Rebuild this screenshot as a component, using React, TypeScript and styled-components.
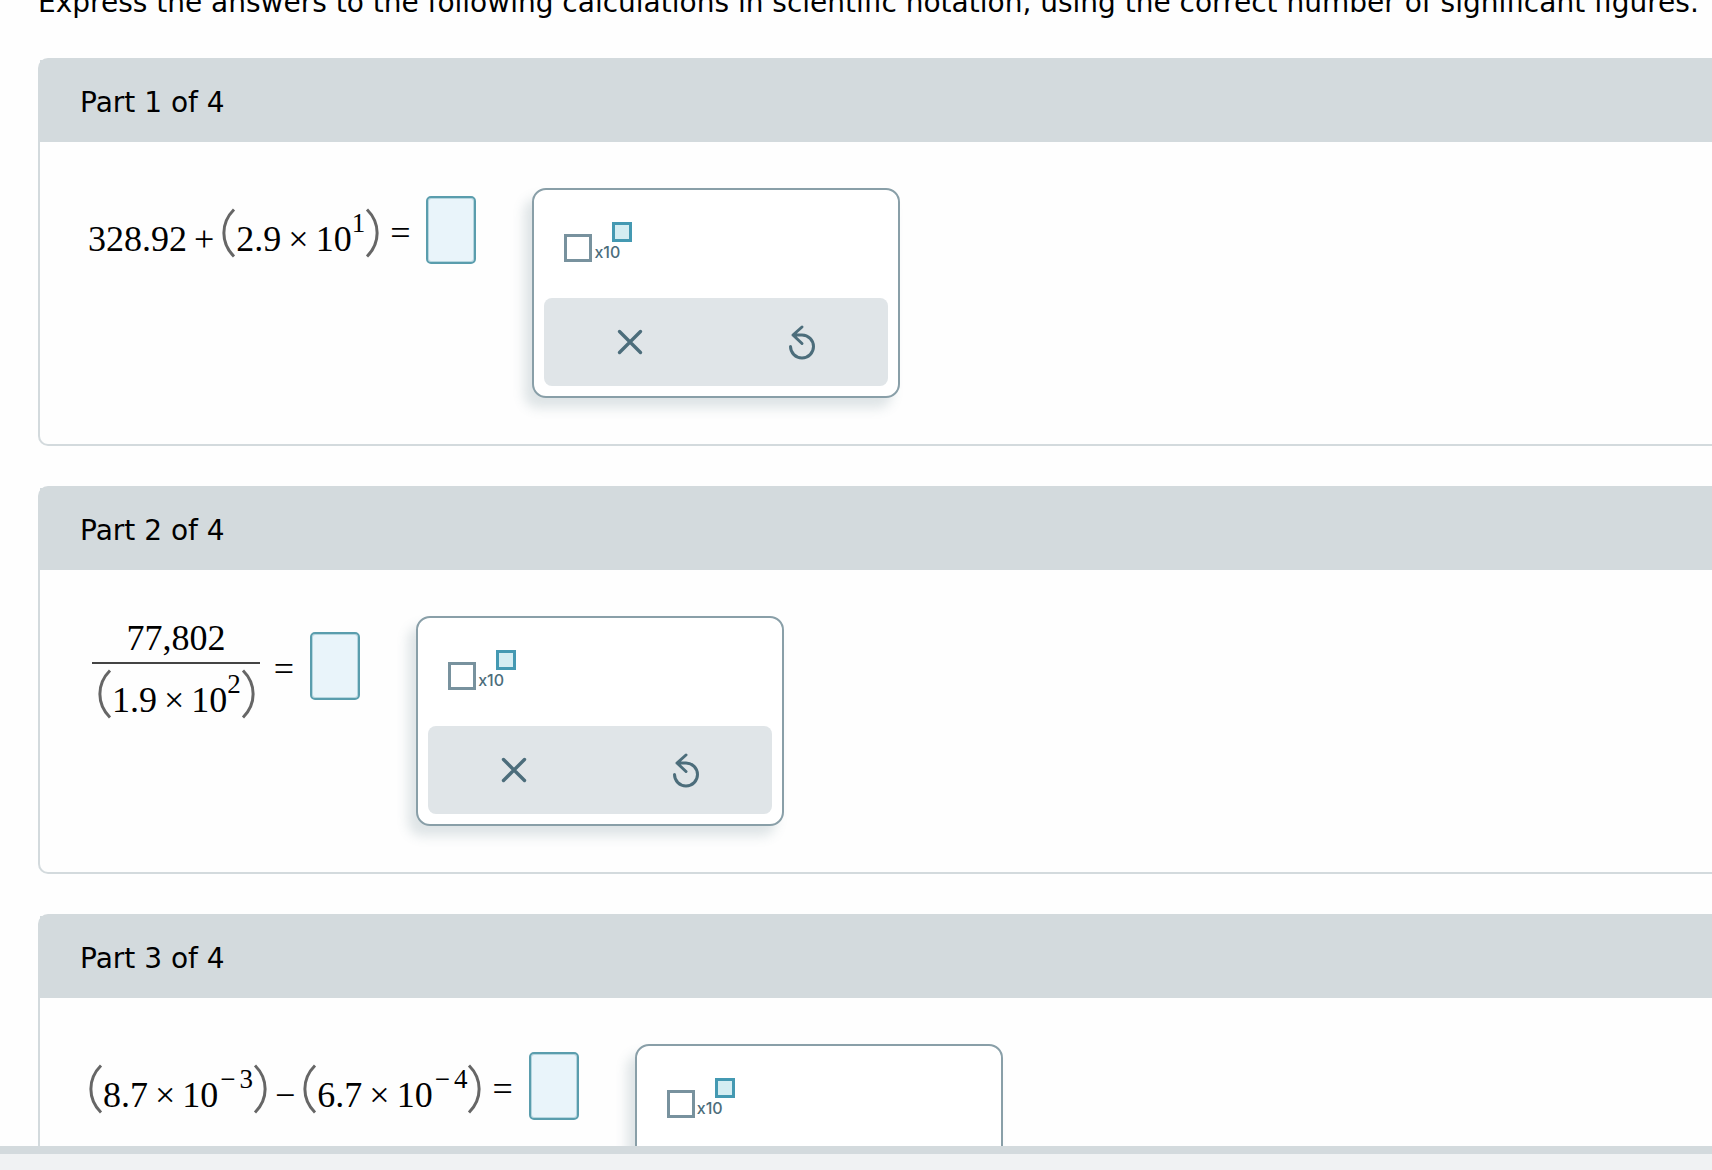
import React from "react";
import styled, { createGlobalStyle } from "styled-components";

const GlobalStyle = createGlobalStyle`
  *, *::before, *::after { box-sizing: border-box; }
  body {
    margin: 0;
    background: #fefefe;
    color: #000;
    font-family: Verdana, "DejaVu Sans", sans-serif;
    font-size: 28px;
  }
  button, input { font: inherit; color: inherit; margin: 0; }
`;

const Page = styled.div`
  display: flex;
  flex-direction: column;
  height: 100vh;
`;

const Worksheet = styled.main`
  flex: 1;
  min-height: 0;
  overflow: hidden;
  padding-left: 38px;
`;

const Instructions = styled.p`
  margin: -16px 0 36px;
  line-height: 38px;
  white-space: nowrap;
`;

const Parts = styled.div`
  display: flex;
  flex-direction: column;
  gap: 40px;
`;

const Card = styled.section`
  border: 2px solid #d3dadd;
  border-right: 0;
  border-radius: 10px 0 0 10px;
`;

const CardHeader = styled.h2`
  margin: 0;
  padding: 24px 40px 20px;
  background: #d3dadd;
  font-size: 28px;
  font-weight: 400;
  line-height: 38px;
`;

const CardBody = styled.div`
  display: flex;
  align-items: flex-start;
  gap: 56px;
  padding: 46px 48px;
`;

const Equation = styled.div<{ $stacked?: boolean }>`
  display: flex;
  align-items: center;
  padding-top: ${(p) => (p.$stacked ? 3 : 8)}px;
  font-family: "Times New Roman", "Liberation Serif", serif;
  font-size: 36px;
  line-height: 38px;
`;

const Terms = styled.div`
  display: flex;
  align-items: flex-end;
  white-space: nowrap;
`;

const Operator = styled.span`
  margin: 0 7px;
`;

const Equals = styled.span`
  margin: 0 16px 0 10px;
`;

const Exponent = styled.sup`
  font-size: 27px;
  line-height: 0;
  vertical-align: 19px;
`;

const ExponentSign = styled.span`
  margin: 0 4px 0 2px;
`;

const ParenShape = styled.svg`
  flex: none;
  width: 15px;
  height: 50px;
`;

const Fraction = styled.div`
  display: flex;
  flex-direction: column;
  align-items: center;
  margin: 0 4px;
`;

const Denominator = styled.div`
  margin-top: 5px;
  padding: 5px 4px 0 5px;
  border-top: 2px solid #444;
`;

const AnswerInput = styled.input`
  flex: none;
  width: 50px;
  height: 68px;
  margin-bottom: 6px;
  padding: 0 8px;
  border: 2px solid #5a9dad;
  border-radius: 5px;
  background: #e9f4fa;
  box-shadow: inset 0 0 0 1px rgba(90, 157, 173, 0.35);
  text-align: center;
`;

const Keypad = styled.div`
  flex: none;
  display: flex;
  flex-direction: column;
  width: 368px;
  padding: 10px;
  border: 2px solid #899fa8;
  border-radius: 14px;
  background: #fff;
  box-shadow: -8px 10px 12px rgba(77, 110, 123, 0.18);
`;

const Templates = styled.div`
  height: 98px;
  padding: 10px 12px;
`;

const TemplateButton = styled.button`
  display: flex;
  align-items: flex-end;
  width: 84px;
  height: 60px;
  padding: 8px;
  border: 0;
  border-radius: 6px;
  background: transparent;
  color: #4c6d7b;
  cursor: pointer;
`;

const BaseSlot = styled.span`
  width: 28px;
  height: 28px;
  border: 3px solid #78929e;
`;

const TemplateLabel = styled.span`
  margin-left: 2px;
  font-family: Inter, Roboto, sans-serif;
  font-size: 16px;
  font-weight: 500;
  line-height: 20px;
`;

const PowerSlot = styled.span`
  width: 20px;
  height: 20px;
  margin: 0 0 20px -8px;
  border: 3px solid #4499b2;
  background: #d4edf2;
`;

const Actions = styled.div`
  display: flex;
  height: 88px;
  border-radius: 8px;
  background: #e0e5e8;
`;

const ActionButton = styled.button`
  flex: 1;
  display: flex;
  align-items: center;
  justify-content: center;
  padding: 0;
  border: 0;
  background: transparent;
  color: #4c6d7b;
  cursor: pointer;
`;

const Footer = styled.footer`
  flex: none;
  height: 24px;
  border-top: 8px solid #d3dadd;
  background: #f0f2f3;
`;

function Paren({ close = false }: { close?: boolean }) {
  return (
    <ParenShape viewBox="0 0 15 50" role="img" aria-label={close ? "close parenthesis" : "open parenthesis"}>
      <path
        d={close ? "M2 1.5C15.500 15 15.500 35 2 48.500" : "M13 1.500C-0.500 15 -0.500 35 13 48.500"}
        fill="none"
        stroke="#666"
        strokeWidth="3"
      />
    </ParenShape>
  );
}

function Scientific({ base, power }: { base: string; power: string }) {
  const negative = power.startsWith("-");
  return (
    <Terms>
      <Paren />
      <span>
        {base}
        <Operator>×</Operator>10
        <Exponent>
          {negative && <ExponentSign>−</ExponentSign>}
          {power.replace("-", "")}
        </Exponent>
      </span>
      <Paren close />
    </Terms>
  );
}

function AnswerKeypad() {
  return (
    <Keypad>
      <Templates>
        <TemplateButton type="button" aria-label="Insert scientific notation">
          <BaseSlot />
          <TemplateLabel>x10</TemplateLabel>
          <PowerSlot />
        </TemplateButton>
      </Templates>
      <Actions>
        <ActionButton type="button" aria-label="Clear">
          <svg width="26" height="26" viewBox="0 0 26 26" fill="none" stroke="currentColor" strokeWidth="3.400" strokeLinecap="round">
            <path d="M2.500 2.500L23.500 23.500M23.500 2.500L2.500 23.500" />
          </svg>
        </ActionButton>
        <ActionButton type="button" aria-label="Undo">
          <svg width="28" height="36" viewBox="0 0 28 36" fill="none" stroke="currentColor" strokeWidth="3" strokeLinecap="round" strokeLinejoin="round">
            <path d="M2.500 22.500A11.500 11.500 0 1 0 14 11H5M14 3L5 11L14 19.500" />
          </svg>
        </ActionButton>
      </Actions>
    </Keypad>
  );
}

type PartProps = { number: number; stacked?: boolean; children: React.ReactNode };

function Part({ number, stacked, children }: PartProps) {
  return (
    <Card>
      <CardHeader>Part {number} of 4</CardHeader>
      <CardBody>
        <Equation $stacked={stacked}>
          {children}
          <Equals>=</Equals>
          <AnswerInput type="text" aria-label={`Answer for part ${number}`} />
        </Equation>
        <AnswerKeypad />
      </CardBody>
    </Card>
  );
}

export default function App() {
  return (
    <Page>
      <GlobalStyle />
      <Worksheet>
        <Instructions>
          Express the answers to the following calculations in scientific notation, using the correct number of
          significant figures.
        </Instructions>
        <Parts>
          <Part number={1}>
            <Terms>
              328.92
              <Operator>+</Operator>
              <Scientific base="2.9" power="1" />
            </Terms>
          </Part>
          <Part number={2} stacked>
            <Fraction>
              <span>77,802</span>
              <Denominator>
                <Scientific base="1.9" power="2" />
              </Denominator>
            </Fraction>
          </Part>
          <Part number={3}>
            <Terms>
              <Scientific base="8.7" power="-3" />
              <Operator>−</Operator>
              <Scientific base="6.7" power="-4" />
            </Terms>
          </Part>
        </Parts>
      </Worksheet>
      <Footer />
    </Page>
  );
}
